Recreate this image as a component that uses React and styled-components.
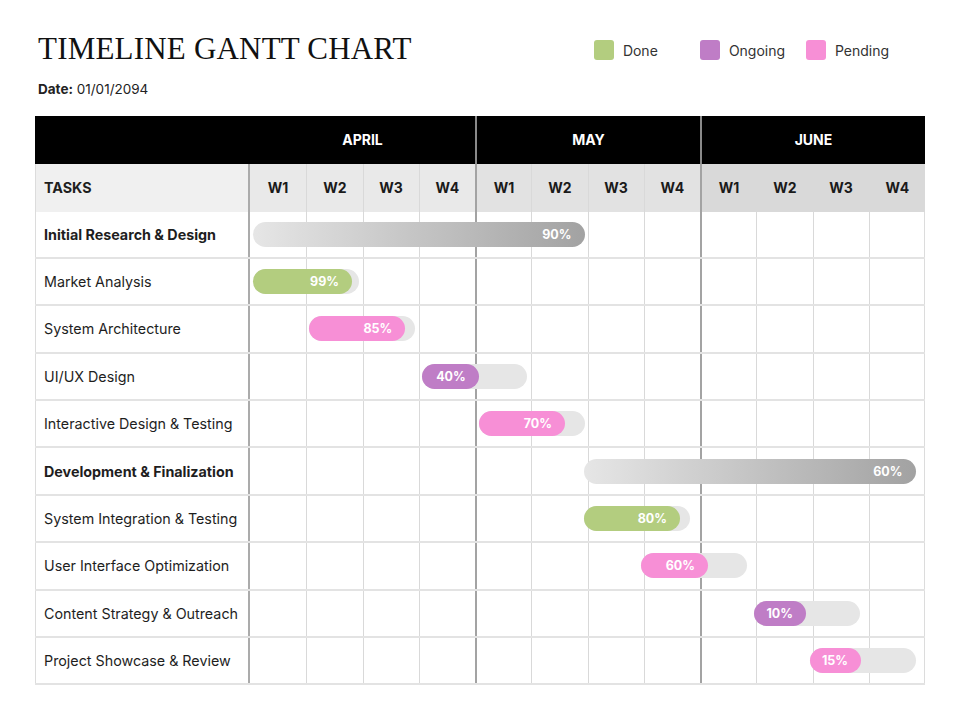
import styled, { createGlobalStyle } from 'styled-components';

const GlobalStyle = createGlobalStyle`
  * { box-sizing: border-box; }
  body {
    margin: 0;
    background: #ffffff;
    font-family: Inter, 'Noto Sans', sans-serif;
    color: #1a1a1a;
  }
`;

const COLORS = {
  done: '#b3cd7f',
  ongoing: '#bf7dc6',
  pending: '#f78fd6',
};

const Page = styled.div`
  width: 960px;
  padding: 31px 35px 0 35px;
`;

const Header = styled.div`
  display: flex;
  justify-content: space-between;
  align-items: flex-start;
`;

const Title = styled.h1`
  margin: 0 0 0 3px;
  font-family: 'Liberation Serif', 'DejaVu Serif', serif;
  font-weight: 400;
  font-size: 31px;
  line-height: 36px;
  letter-spacing: 0.2px;
  color: #111;
`;

const Legend = styled.div`
  display: flex;
  margin-top: 9px;
  padding-right: 36px;
`;

const LegendItem = styled.div`
  display: flex;
  align-items: center;
  gap: 9px;
  width: 106px;
  font-size: 14px;
  color: #333;
  &:last-child { width: auto; }
`;

const Swatch = styled.span`
  width: 20px;
  height: 20px;
  border-radius: 3px;
  background: ${(p) => p.color};
`;

const DateLine = styled.div`
  margin: 13px 0 18px 3px;
  font-size: 13.5px;
  line-height: 18px;
  color: #222;
  b { font-weight: 700; }
`;

const Table = styled.div`
  width: 890px;
`;

const MonthRow = styled.div`
  display: grid;
  grid-template-columns: 215px repeat(3, 1fr);
  height: 47.5px;
  background: #000;
`;

const MonthCell = styled.div`
  display: flex;
  align-items: center;
  justify-content: center;
  color: #fff;
  font-weight: 700;
  font-size: 14px;
  border-left: ${(p) => (p.divider ? '2px solid #8a8a8a' : 'none')};
`;

const Grid = styled.div`
  display: grid;
  grid-template-columns: 215px repeat(12, 1fr);
  height: ${(p) => (p.head ? '48px' : '47.4px')};
  border-bottom: ${(p) => (p.head ? 'none' : '2px solid #e3e3e3')};
`;

const TaskCell = styled.div`
  grid-column: 1;
  grid-row: 1;
  display: flex;
  align-items: center;
  padding-left: 8px;
  font-size: 14.3px;
  font-weight: ${(p) => (p.bold ? 700 : 400)};
  color: #1e1e1e;
  background: ${(p) => (p.head ? '#f0f0f0' : '#fff')};
  border-left: 1px solid #dcdcdc;
  border-right: 2px solid #ababab;
`;

const WeekCell = styled.div`
  grid-row: 1;
  grid-column: ${(p) => p.col};
  display: flex;
  align-items: center;
  justify-content: center;
  font-size: 14px;
  font-weight: 700;
  color: #1a1a1a;
  background: ${(p) => p.bg || '#fff'};
  border-left: ${(p) =>
    p.monthStart ? '2px solid #a3a3a3' : p.first ? 'none' : '1px solid #d9d9d9'};
  border-right: ${(p) => (p.last ? '1px solid #dcdcdc' : 'none')};
`;

const SummaryBar = styled.div`
  grid-row: 1;
  grid-column: ${(p) => p.col} / span ${(p) => p.span};
  align-self: center;
  justify-self: start;
  z-index: 1;
  width: calc(100% - 6px);
  height: 25px;
  margin-left: ${(p) => p.offset}px;
  border-radius: 13px;
  background: linear-gradient(90deg, #e6e6e6 0%, #a2a2a2 100%);
  display: flex;
  align-items: center;
  justify-content: flex-end;
  padding-right: 13px;
  color: #fff;
  font-size: 12.5px;
  font-weight: 700;
`;

const Track = styled.div`
  grid-row: 1;
  grid-column: ${(p) => p.col} / span ${(p) => p.span};
  align-self: center;
  justify-self: start;
  z-index: 1;
  width: calc(100% - 7px);
  height: 25px;
  margin-left: ${(p) => p.offset}px;
  border-radius: 13px;
  background: #e6e6e6;
  display: flex;
`;

const Fill = styled.div`
  width: ${(p) => p.w}px;
  height: 100%;
  border-radius: 13px;
  background: ${(p) => p.color};
  display: flex;
  align-items: center;
  justify-content: flex-end;
  padding-right: 13px;
  color: #fff;
  font-size: 12.5px;
  font-weight: 700;
`;

const MONTHS = ['APRIL', 'MAY', 'JUNE'];
const WEEK_BG = ['#e9e9e9', '#e2e2e2', '#d9d9d9'];

const TASKS = [
  { name: 'Initial Research & Design', summary: true, start: 0, span: 6, pct: 90, offset: 3 },
  { name: 'Market Analysis', status: 'done', start: 0, span: 2, pct: 99, fill: 99, offset: 3 },
  { name: 'System Architecture', status: 'pending', start: 1, span: 2, pct: 85, fill: 96, offset: 3 },
  { name: 'UI/UX Design', status: 'ongoing', start: 3, span: 2, pct: 40, fill: 57, offset: 3 },
  { name: 'Interactive Design & Testing', status: 'pending', start: 4, span: 2, pct: 70, fill: 86, offset: 4 },
  { name: 'Development & Finalization', summary: true, start: 6, span: 6, pct: 60, offset: -3.5 },
  { name: 'System Integration & Testing', status: 'done', start: 6, span: 2, pct: 80, fill: 96, offset: -3.5 },
  { name: 'User Interface Optimization', status: 'pending', start: 7, span: 2, pct: 60, fill: 67, offset: -2.75 },
  { name: 'Content Strategy & Outreach', status: 'ongoing', start: 9, span: 2, pct: 10, fill: 52, offset: -2.25 },
  { name: 'Project Showcase & Review', status: 'pending', start: 10, span: 2, pct: 15, fill: 51, offset: -2.5 },
];

const weeks = Array.from({ length: 12 }, (_, i) => i);

const App = () => {
  return (
    <Page>
      <GlobalStyle />
      <Header>
        <Title>TIMELINE GANTT CHART</Title>
        <Legend>
          <LegendItem><Swatch color={COLORS.done} />Done</LegendItem>
          <LegendItem><Swatch color={COLORS.ongoing} />Ongoing</LegendItem>
          <LegendItem><Swatch color={COLORS.pending} />Pending</LegendItem>
        </Legend>
      </Header>
      <DateLine><b>Date:</b> 01/01/2094</DateLine>

      <Table>
        <MonthRow>
          <div />
          {MONTHS.map((m, i) => (
            <MonthCell key={m} divider={i > 0}>{m}</MonthCell>
          ))}
        </MonthRow>

        <Grid head>
          <TaskCell head bold>TASKS</TaskCell>
          {weeks.map((w) => (
            <WeekCell
              key={w}
              col={w + 2}
              bg={WEEK_BG[Math.floor(w / 4)]}
              first={w === 0}
              monthStart={w > 0 && w % 4 === 0}
            >
              W{(w % 4) + 1}
            </WeekCell>
          ))}
        </Grid>

        {TASKS.map((t) => (
          <Grid key={t.name}>
            <TaskCell bold={t.summary}>{t.name}</TaskCell>
            {weeks.map((w) => (
              <WeekCell
                key={w}
                col={w + 2}
                first={w === 0}
                last={w === 11}
                monthStart={w > 0 && w % 4 === 0}
              />
            ))}
            {t.summary ? (
              <SummaryBar col={t.start + 2} span={t.span} offset={t.offset}>
                {t.pct}%
              </SummaryBar>
            ) : (
              <Track col={t.start + 2} span={t.span} offset={t.offset}>
                <Fill w={t.fill} color={COLORS[t.status]}>{t.pct}%</Fill>
              </Track>
            )}
          </Grid>
        ))}
      </Table>
    </Page>
  );
};

export default App;
